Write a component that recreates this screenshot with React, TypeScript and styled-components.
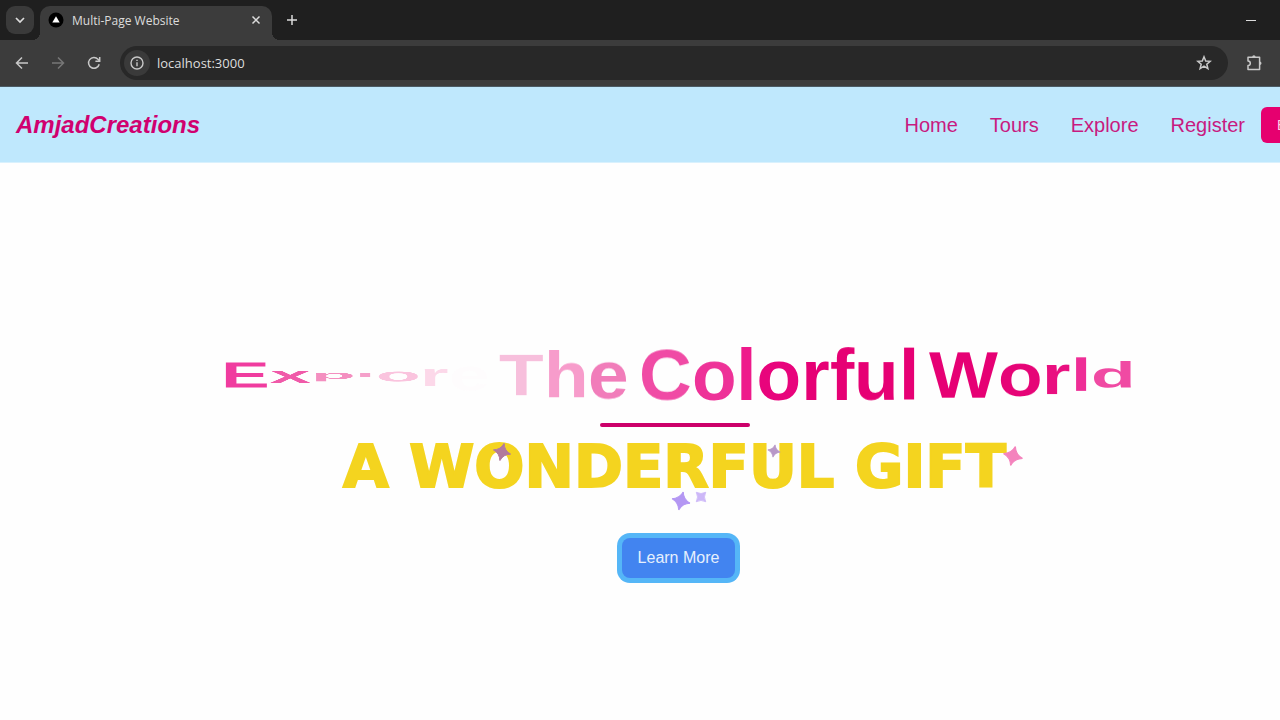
import React from "react";
import styled, { createGlobalStyle } from "styled-components";

const GlobalStyle = createGlobalStyle`
  * { box-sizing: border-box; }
  body { margin: 0; background: #fefefe; font-family: "Liberation Sans", Arial, sans-serif; overflow: hidden; }
  button, input { font: inherit; border: 0; }
`;

const Window = styled.div`
  min-height: 100vh;
  overflow: hidden;
`;

const TabStrip = styled.div`
  display: flex;
  align-items: flex-start;
  height: 40px;
  padding: 6px 20px 0 6px;
  background: #1f1f1f;
  color: #dcdcdc;
  font-family: "Open Sans", "Noto Sans", sans-serif;
`;

const IconButton = styled.button<{ $size: number; $bg?: string; $radius?: string }>`
  display: flex;
  flex: none;
  align-items: center;
  justify-content: center;
  width: ${(p) => p.$size}px;
  height: ${(p) => p.$size}px;
  padding: 0;
  border-radius: ${(p) => p.$radius ?? "50%"};
  background: ${(p) => p.$bg ?? "transparent"};
  color: inherit;
`;

const Tab = styled.div`
  position: relative;
  display: flex;
  align-items: center;
  gap: 8px;
  width: 232px;
  height: 34px;
  margin-left: 6px;
  padding: 0 6px 6px 8px;
  border-radius: 10px 10px 0 0;
  background: #3c3c3c;
  font-size: 12px;

  &::before,
  &::after {
    content: "";
    position: absolute;
    bottom: 0;
    width: 8px;
    height: 8px;
  }
  &::before {
    right: 100%;
    background: radial-gradient(circle at 0 0, #1f1f1f 8px, #3c3c3c 8px);
  }
  &::after {
    left: 100%;
    background: radial-gradient(circle at 100% 0, #1f1f1f 8px, #3c3c3c 8px);
  }
`;

const TabTitle = styled.span`
  flex: 1;
  white-space: nowrap;
`;

const NewTab = styled.div`
  flex: 1;
  margin-left: 6px;
`;

const Toolbar = styled.div`
  display: flex;
  align-items: center;
  gap: 8px;
  height: 47px;
  padding: 0 12px 0 8px;
  border-bottom: 1px solid #4b5a63;
  background: #3c3c3c;
  color: #c8c8c8;
`;

const AddressBar = styled.div`
  display: flex;
  flex: 1;
  align-items: center;
  height: 34px;
  margin: 0 4px;
  padding: 0 10px 0 4px;
  border-radius: 17px;
  background: #282828;
`;

const AddressInput = styled.input`
  flex: 1;
  min-width: 0;
  margin-left: 7px;
  padding: 0;
  background: transparent;
  color: #dedede;
  font-family: "Open Sans", "Noto Sans", sans-serif;
  font-size: 13px;
  outline: none;
`;

/* The site is laid out a little wider than the visible window. */
const Page = styled.div`
  width: calc(100% + 77px);
`;

const SiteHeader = styled.header`
  display: flex;
  align-items: center;
  justify-content: space-between;
  height: 76px;
  padding: 0 16px;
  border-bottom: 1px solid #d9f1fd;
  background: #bfe8fd;
`;

const Logo = styled.a`
  color: #d0006f;
  font-size: 24px;
  font-style: italic;
  font-weight: 700;
  text-decoration: none;
`;

const Nav = styled.nav`
  display: flex;
  align-items: center;
  gap: 16px;
`;

const NavLinks = styled.div`
  display: flex;
  gap: 32px;
  line-height: 26px;
  padding-top: 1px;
`;

const NavLink = styled.a`
  color: #c81a80;
  font-size: 20px;
  text-decoration: none;
`;

const BookButton = styled.button`
  width: 80px;
  height: 36px;
  padding: 0 16px;
  border-radius: 6px;
  background: #e6006f;
  color: #fbd5e8;
  font-size: 14px;
  text-align: left;
`;

const Hero = styled.main`
  display: flex;
  flex-direction: column;
  align-items: center;
  padding: 176px 16px 96px;
`;

const Headline = styled.h1`
  display: flex;
  gap: 10px;
  margin: 0;
  font-size: 73px;
  font-weight: 700;
  line-height: 72px;
`;

const Word = styled.span`
  display: inline-flex;
`;

const FlipLetter = styled.span<{ $angle: number; $color: string }>`
  display: inline-block;
  color: ${(p) => p.$color};
  transform: rotateX(${(p) => p.$angle}deg);
`;

const Tagline = styled.div`
  display: flex;
  flex-direction: column;
  align-items: center;
  padding-right: 8px;
`;

const Underline = styled.div`
  width: 150px;
  height: 4px;
  margin: 12px 0 8px;
  border-radius: 2px;
  background: #cc006a;
`;

const SparkleText = styled.h2`
  position: relative;
  margin: 0;
  color: #f4d41f;
  font-family: "DejaVu Sans", sans-serif;
  font-size: 59px;
  font-weight: 700;
  line-height: 63px;
  white-space: nowrap;
  -webkit-text-stroke: 2px #f4d41f;
`;

const SparkleIcon = styled.svg<{ $x: number; $y: number; $size: number; $turn: number }>`
  position: absolute;
  left: ${(p) => p.$x}%;
  top: ${(p) => p.$y}px;
  width: ${(p) => p.$size}px;
  height: ${(p) => p.$size}px;
  transform: translate(-50%, -50%) rotate(${(p) => p.$turn}deg);
`;

const LearnMore = styled.button`
  height: 40px;
  margin-top: 40px;
  padding: 0 16px;
  border-radius: 8px;
  background: #4284f0;
  box-shadow: 0 0 0 5px #55b6f7;
  color: #e6f0fd;
  font-size: 16px;
`;

type Letter = [char: string, angle: number, color: string];

const words: Letter[][] = [
  [
    ["E", 60, "#f03c9f"],
    ["x", 72, "#f05aa9"],
    ["p", 81, "#f48fc0"],
    ["l", 86, "#f5a0ca"],
    ["o", 75, "#fac4de"],
    ["r", 64, "#fcd8e9"],
    ["e", 52, "#fefcfd"],
  ],
  [
    ["T", 36, "#f7bfdc"],
    ["h", 27, "#f79ccb"],
    ["e", 20, "#f17dba"],
  ],
  [
    ["C", 10, "#f04ba5"],
    ["o", 4, "#ee3298"],
    ["l", 0, "#ee1a8b"],
    ["o", 0, "#e8047c"],
    ["r", 0, "#e60075"],
    ["f", 4, "#e60074"],
    ["u", 8, "#e60074"],
    ["l", 12, "#e60074"],
  ],
  [
    ["W", 25, "#e60074"],
    ["o", 33, "#e60477"],
    ["r", 40, "#e90f80"],
    ["l", 51, "#ee2e96"],
    ["d", 60, "#f04aa3"],
  ],
];

const sparkles = [
  { x: 24, y: 17, size: 18, turn: 14, color: "#b27a9d" },
  { x: 65, y: 16, size: 13, turn: 10, color: "#b898c8" },
  { x: 101, y: 21, size: 20, turn: 14, color: "#f483bd" },
  { x: 51, y: 66, size: 19, turn: 14, color: "#b497f3" },
  { x: 54, y: 62, size: 14, turn: 45, color: "#cdb8f8" },
];

const stroke = { fill: "none", stroke: "currentColor", strokeWidth: 1.5 } as const;

export default function App() {
  return (
    <>
      <GlobalStyle />
      <Window>
        <TabStrip>
          <IconButton $size={28} $bg="#3a3a3a" $radius="9px" aria-label="Search tabs">
            <svg width="10" height="10" viewBox="0 0 10 10" {...stroke} strokeWidth={1.7}>
              <path d="M1 3 5 7 9 3" />
            </svg>
          </IconButton>
          <Tab>
            <svg width="16" height="16" viewBox="0 0 16 16">
              <circle cx="8" cy="8" r="7.5" fill="#000" />
              <path d="M8 4.2 11.7 10.6H4.3Z" fill="#fff" />
            </svg>
            <TabTitle>Multi-Page Website</TabTitle>
            <IconButton $size={20} aria-label="Close tab">
              <svg width="10" height="10" viewBox="0 0 10 10" {...stroke}>
                <path d="M1.5 1.5 8.5 8.5M8.5 1.5 1.5 8.5" />
              </svg>
            </IconButton>
          </Tab>
          <NewTab>
            <IconButton $size={28} aria-label="New tab">
              <svg width="12" height="12" viewBox="0 0 12 12" {...stroke}>
                <path d="M6 1V11M1 6H11" />
              </svg>
            </IconButton>
          </NewTab>
          <IconButton $size={18} $radius="0" aria-label="Minimize">
            <svg width="10" height="28" viewBox="0 0 10 28" {...stroke} strokeWidth={1}>
              <path d="M0 19.5H10" />
            </svg>
          </IconButton>
        </TabStrip>

        <Toolbar>
          <IconButton $size={28} aria-label="Back">
            <svg width="14" height="14" viewBox="0 0 14 14" {...stroke}>
              <path d="M13 7H1.8M7 1.5 1.5 7 7 12.5" />
            </svg>
          </IconButton>
          <IconButton $size={28} disabled aria-label="Forward">
            <svg width="14" height="14" viewBox="0 0 14 14" {...stroke} stroke="#777">
              <path d="M1 7H12.2M7 1.5 12.5 7 7 12.5" />
            </svg>
          </IconButton>
          <IconButton $size={28} aria-label="Reload">
            <svg width="14" height="14" viewBox="0 0 14 14" {...stroke}>
              <path d="M12.2 8.2A5.4 5.4 0 1 1 11 3.3L12.5 5" />
              <path d="M12.7 1V5.3H8.4" />
            </svg>
          </IconButton>
          <AddressBar>
            <IconButton $size={26} $bg="#3a3a3a" aria-label="Site information">
              <svg width="14" height="14" viewBox="0 0 14 14" {...stroke} strokeWidth={1.4}>
                <circle cx="7" cy="7" r="6" />
                <path d="M7 6.3V10.3M7 3.7V5.1" />
              </svg>
            </IconButton>
            <AddressInput aria-label="Address" defaultValue="localhost:3000" />
            <IconButton $size={28} aria-label="Bookmark">
              <svg width="16" height="16" viewBox="0 0 16 16" {...stroke}>
                <path d="M8 1.8 9.7 6 14.2 6.3 10.8 9.2 11.9 13.6 8 11.2 4.1 13.6 5.2 9.2 1.8 6.3 6.3 6Z" />
              </svg>
            </IconButton>
          </AddressBar>
          <IconButton $size={28} aria-label="Extensions">
            <svg width="18" height="18" viewBox="0 0 18 18" {...stroke} strokeLinejoin="round">
              <path d="M3 3.2H14.6V15.4H3V11.6A2.3 2.3 0 0 0 3 7Z" />
              <path d="M7.2 3A1.7 1.7 0 0 1 10.600 3ZM14.800 7.600A1.700 1.700 0 0 1 14.800 11Z" fill="currentColor" stroke="none" />
            </svg>
          </IconButton>
        </Toolbar>

        <Page>
          <SiteHeader>
            <Logo href="#">AmjadCreations</Logo>
            <Nav>
              <NavLinks>
                <NavLink href="#home">Home</NavLink>
                <NavLink href="#tours">Tours</NavLink>
                <NavLink href="#explore">Explore</NavLink>
                <NavLink href="#register">Register</NavLink>
              </NavLinks>
              <BookButton>B</BookButton>
            </Nav>
          </SiteHeader>

          <Hero>
            <Headline>
              {words.map((word, w) => (
                <Word key={w}>
                  {word.map(([char, angle, color], i) => (
                    <FlipLetter key={i} $angle={angle} $color={color}>
                      {char}
                    </FlipLetter>
                  ))}
                </Word>
              ))}
            </Headline>
            <Tagline>
              <Underline />
              <SparkleText>
                A WONDERFUL GIFT
                {sparkles.map((s, i) => (
                  <SparkleIcon
                    key={i}
                    $x={s.x}
                    $y={s.y}
                    $size={s.size}
                    $turn={s.turn}
                    viewBox="0 0 20 20"
                    aria-hidden="true"
                  >
                    <path
                      d="M10 0Q12 8 20 10Q12 12 10 20Q8 12 0 10Q8 8 10 0Z"
                      fill={s.color}
                      stroke={s.color}
                      strokeWidth="1"
                    />
                  </SparkleIcon>
                ))}
              </SparkleText>
            </Tagline>
            <LearnMore>Learn More</LearnMore>
          </Hero>
        </Page>
      </Window>
    </>
  );
}
